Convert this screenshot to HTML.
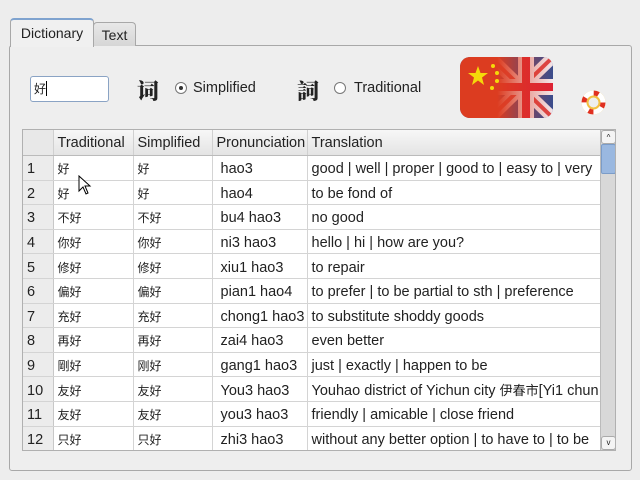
<!DOCTYPE html><html><head><style>
body{margin:0;width:640px;height:480px;background:#ededed;font-family:"Liberation Sans","DejaVu Sans","Noto Sans CJK SC",sans-serif;position:relative;overflow:hidden;color:#222}
.a{position:absolute}
.tab{position:absolute;border:1px solid #a8a8a8;border-bottom:none;border-radius:4px 4px 0 0;font-size:14px;text-align:center}
table{border-collapse:collapse;font-size:14.5px;table-layout:fixed}
td{border-right:1px solid #d4d4d4;border-bottom:1px solid #d4d4d4;height:24.6px;line-height:18px;padding:3px 0 0 4px;box-sizing:border-box;vertical-align:middle;white-space:nowrap;overflow:hidden;background:#fff}
td.n{background:#ececec;border-right:1px solid #c8c8c8}
th{font-weight:normal;text-align:left;height:25px;padding:0 0 0 4px;border-right:1px solid #d0d0d0;border-bottom:1px solid #bbb;background:linear-gradient(#f7f7f7,#e4e4e4)}
.c{font-family:"Noto Sans CJK SC",sans-serif;font-size:12px}
</style></head><body>
<div class="a" style="left:9px;top:45px;width:621px;height:424px;border:1px solid #a8a8a8;border-radius:3px;background:#eeeeee"></div>
<div class="tab" style="left:10px;top:18px;width:82px;height:27px;line-height:27px;background:#f0f0f0;border-top:2px solid #7fa3cf;">Dictionary</div>
<div class="tab" style="left:93px;top:22px;width:41px;height:23px;line-height:25px;background:linear-gradient(#e8e8e8,#d6d6d6)">Text</div>
<div class="a" style="left:30px;top:76px;border:1px solid #8aa3c4;border-radius:3px;background:#fff;font-size:13px;line-height:24px;padding-left:3px;box-sizing:border-box;width:79px;height:26px" ><span class="c">好</span><span style="border-left:1px solid #000;"></span></div>
<div class="a" style="left:137px;top:75px;font-family:'Noto Serif CJK SC',serif;font-weight:900;font-size:22px">词</div>
<div class="a" style="left:175px;top:82px;width:10px;height:10px;border:1px solid #777;border-radius:50%;background:#fff"><div style="margin:3px;width:4px;height:4px;border-radius:50%;background:#333"></div></div>
<div class="a" style="left:193px;top:80px;font-size:14.5px">Simplified</div>
<div class="a" style="left:297px;top:75px;font-family:'Noto Serif CJK SC',serif;font-weight:900;font-size:22px">詞</div>
<div class="a" style="left:334px;top:82px;width:10px;height:10px;border:1px solid #777;border-radius:50%;background:#fff"></div>
<div class="a" style="left:354px;top:80px;font-size:14.5px">Traditional</div>
<svg class="a" style="left:460px;top:57px" width="93" height="61" viewBox="0 0 93 61">
<defs><clipPath id="r"><rect width="93" height="61" rx="10"/></clipPath><linearGradient id="f" x1="0" x2="1"><stop offset="0.4" stop-color="#dc3c20"/><stop offset=".75" stop-color="#dc3c20" stop-opacity=".35"/><stop offset="1" stop-color="#dc3c20" stop-opacity="0"/></linearGradient></defs>
<g clip-path="url(#r)"><rect width="93" height="61" fill="#3a4c8c"/>
<path d="M30 0L93 61M93 0L30 61" stroke="#f2e6ea" stroke-width="12"/><path d="M30 0L93 61M93 0L30 61" stroke="#d44" stroke-width="4"/>
<rect x="58" y="0" width="16" height="61" fill="#f2e6ea"/><rect x="30" y="22" width="63" height="16" fill="#f2e6ea"/>
<rect x="62" y="0" width="8" height="61" fill="#d23"/><rect x="30" y="26" width="63" height="8" fill="#d23"/>
<rect width="93" height="61" fill="url(#f)"/>
<polygon points="18,9 20.5,16 28,16 22,20.5 24,28 18,23.5 12,28 14,20.5 8,16 15.5,16" fill="#f5d90a"/>
<circle cx="33" cy="9" r="2" fill="#f5d90a"/><circle cx="37" cy="16" r="2" fill="#f5d90a"/><circle cx="37" cy="24" r="2" fill="#f5d90a"/><circle cx="32" cy="31" r="2" fill="#f5d90a"/></g></svg>
<svg class="a" style="left:580px;top:89px" width="27" height="27" viewBox="0 0 27 27"><circle cx="13.5" cy="13.5" r="12" fill="#f3c040"/><circle cx="13.5" cy="13.5" r="9.5" fill="none" stroke="#fff" stroke-width="5"/><circle cx="13.5" cy="13.5" r="9.5" fill="none" stroke="#e03020" stroke-width="5" stroke-dasharray="5 9.9"/><circle cx="13.5" cy="13.5" r="5" fill="#eee"/></svg>
<div class="a" style="left:22px;top:129px;width:592px;height:320px;border:1px solid #b0b0b0;background:#fff;overflow:hidden">
<table style="width:577px">
<colgroup><col style="width:30px"><col style="width:80px"><col style="width:79px"><col style="width:95px"><col style="width:293px"></colgroup>
<tr><th style="background:#e8e8e8"></th><th>Traditional</th><th>Simplified</th><th>Pronunciation</th><th>Translation</th></tr>
<tr><td class="n">1</td><td class="c">好</td><td class="c">好</td><td>&nbsp;hao3</td><td>good | well | proper | good to | easy to | very</td></tr>
<tr><td class="n">2</td><td class="c">好</td><td class="c">好</td><td>&nbsp;hao4</td><td>to be fond of</td></tr>
<tr><td class="n">3</td><td class="c">不好</td><td class="c">不好</td><td>&nbsp;bu4 hao3</td><td>no good</td></tr>
<tr><td class="n">4</td><td class="c">你好</td><td class="c">你好</td><td>&nbsp;ni3 hao3</td><td>hello | hi | how are you?</td></tr>
<tr><td class="n">5</td><td class="c">修好</td><td class="c">修好</td><td>&nbsp;xiu1 hao3</td><td>to repair</td></tr>
<tr><td class="n">6</td><td class="c">偏好</td><td class="c">偏好</td><td>&nbsp;pian1 hao4</td><td>to prefer | to be partial to sth | preference</td></tr>
<tr><td class="n">7</td><td class="c">充好</td><td class="c">充好</td><td>&nbsp;chong1 hao3</td><td>to substitute shoddy goods</td></tr>
<tr><td class="n">8</td><td class="c">再好</td><td class="c">再好</td><td>&nbsp;zai4 hao3</td><td>even better</td></tr>
<tr><td class="n">9</td><td class="c">剛好</td><td class="c">刚好</td><td>&nbsp;gang1 hao3</td><td>just | exactly | happen to be</td></tr>
<tr><td class="n">10</td><td class="c">友好</td><td class="c">友好</td><td>&nbsp;You3 hao3</td><td>Youhao district of Yichun city <span style="font-size:13px;line-height:10px">伊春市</span>[Yi1 chun</td></tr>
<tr><td class="n">11</td><td class="c">友好</td><td class="c">友好</td><td>&nbsp;you3 hao3</td><td>friendly | amicable | close friend</td></tr>
<tr><td class="n">12</td><td class="c">只好</td><td class="c">只好</td><td>&nbsp;zhi3 hao3</td><td>without any better option | to have to | to be</td></tr>
</table>
<div class="a" style="left:577px;top:0;width:15px;height:320px;background:#d8d8d8;border-left:1px solid #bbb">
<div style="height:14px;background:#f4f4f4;border:1px solid #aaa;border-radius:3px;font-size:8px;text-align:center;line-height:14px;box-sizing:border-box">^</div>
<div style="height:30px;background:#9ab8e0;border:1px solid #7b9cc8;border-radius:2px;box-sizing:border-box"></div>
<div style="position:absolute;bottom:0;width:15px;height:14px;background:#f4f4f4;border:1px solid #aaa;border-radius:3px;font-size:8px;text-align:center;line-height:12px;box-sizing:border-box">v</div>
</div></div>
<svg class="a" style="left:78px;top:175px" width="14" height="20"><path d="M1 1L1 16L5 12L8 19L10 18L7 11L12 11Z" fill="#fff" stroke="#000"/></svg>
</body></html>
